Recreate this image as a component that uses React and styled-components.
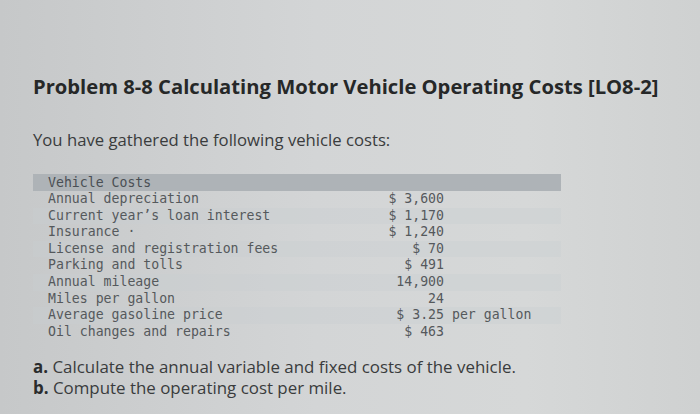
import styled, { createGlobalStyle } from 'styled-components';

const GlobalStyle = createGlobalStyle`
  html, body {
    margin: 0;
    padding: 0;
  }
  body {
    width: 700px;
    height: 414px;
    overflow: hidden;
    background: linear-gradient(90deg, #c6c8c9 0%, #d3d5d6 45%, #d6d8d8 75%, #cfd1d1 100%);
  }
`;

const Page = styled.div`
  width: 700px;
  height: 414px;
  box-sizing: border-box;
  padding: 73px 0 0 33px;
  font-family: 'Open Sans', 'Liberation Sans', sans-serif;
`;

const Title = styled.h1`
  margin: 0;
  font-size: 20.2px;
  line-height: 26px;
  font-weight: 700;
  color: #262828;
`;

const Intro = styled.p`
  margin: 30px 0 0;
  font-size: 16.7px;
  line-height: 22px;
  color: #3a3c3d;
`;

const Table = styled.div`
  margin-top: 23px;
  width: 528px;
  font-family: 'DejaVu Sans Mono', 'Liberation Mono', monospace;
  font-size: 13.2px;
  color: #55595c;
`;

const HeaderRow = styled.div`
  background: #aeb3b7;
  height: 17px;
  line-height: 17px;
  padding-left: 15px;
  color: #4a4f54;
`;

const Row = styled.div`
  display: grid;
  grid-template-columns: 316px 80px auto;
  height: 16.6px;
  line-height: 16.6px;
  padding-left: 15px;
  background: ${p => (p.$shade ? 'rgba(200, 205, 208, 0.35)' : 'transparent')};
`;

const Label = styled.span`
  white-space: pre;
`;

const Value = styled.span`
  text-align: right;
  white-space: pre;
`;

const Suffix = styled.span`
  white-space: pre;
`;

const Questions = styled.div`
  margin-top: 16px;
  font-size: 16.9px;
  color: #3a3c3d;
  line-height: 21px;
`;

const Letter = styled.b`
  font-weight: 700;
  color: #2a2c2d;
`;

const rows = [
  ['Annual depreciation', '$ 3,600'],
  ['Current year\u2019s loan interest', '$ 1,170'],
  ['Insurance \u00b7', '$ 1,240'],
  ['License and registration fees', '$ 70'],
  ['Parking and tolls', '$ 491'],
  ['Annual mileage', '14,900'],
  ['Miles per gallon', '24'],
  ['Average gasoline price', '$ 3.25', ' per gallon'],
  ['Oil changes and repairs', '$ 463'],
];

export default function App() {
  return (
    <>
      <GlobalStyle />
      <Page>
        <Title>Problem 8-8 Calculating Motor Vehicle Operating Costs [LO8-2]</Title>
        <Intro>You have gathered the following vehicle costs:</Intro>
        <Table>
          <HeaderRow>Vehicle Costs</HeaderRow>
          {rows.map(([label, value, suffix], i) => (
            <Row key={label} $shade={i % 2 === 1}>
              <Label>{label}</Label>
              <Value>{value}</Value>
              <Suffix>{suffix}</Suffix>
            </Row>
          ))}
        </Table>
        <Questions>
          <div><Letter>a.</Letter> Calculate the annual variable and fixed costs of the vehicle.</div>
          <div><Letter>b.</Letter> Compute the operating cost per mile.</div>
        </Questions>
      </Page>
    </>
  );
}
